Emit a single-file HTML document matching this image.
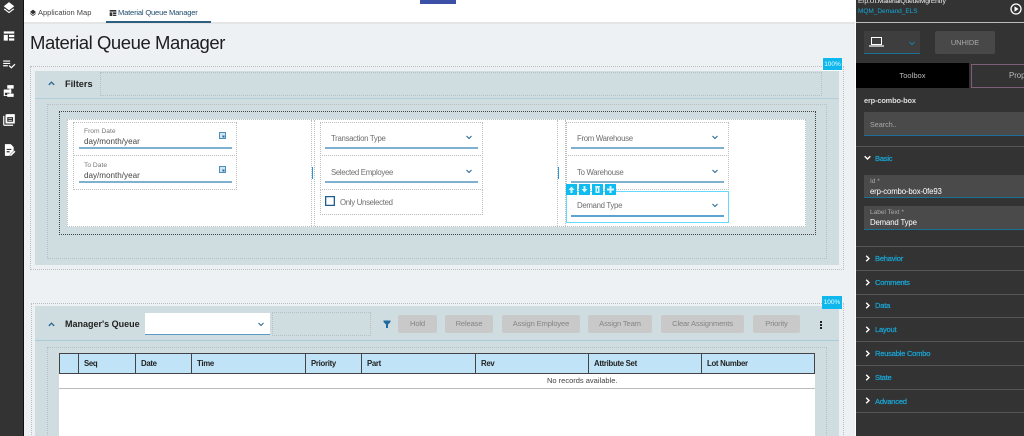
<!DOCTYPE html>
<html lang="en"><head><meta charset="utf-8"><title>Material Queue Manager</title>
<style>
html,body{margin:0;padding:0;width:1024px;height:436px;overflow:hidden;background:#eef1f4;font-family:"Liberation Sans",sans-serif}
#r{position:relative;width:1024px;height:436px;overflow:hidden}
#r div,#r span,#r svg{position:absolute;box-sizing:border-box}
.t{white-space:nowrap;line-height:12px;font-size:8.5px;color:#555}
.l{font-size:7.8px;letter-spacing:-.3px;color:#6f6f6f;margin-top:1px}
.d{border:1px dotted #b9bebf}
.u{height:2px;background:#7fb0d0}
.w{background:#fff}
.btn{top:315px;height:18px;background:#c9c9c9;border-radius:2px;color:#858585;font-size:7.6px;letter-spacing:-.15px;line-height:18px;text-align:center;white-space:nowrap}
.th{top:354px;height:19px;background:#c0e3f7;border-right:1px solid #444;font-size:7.8px;letter-spacing:-.3px;font-weight:bold;line-height:19px;color:#222;padding-left:5px;white-space:nowrap}
.sec{left:875px;color:#18a8d8;font-size:7.6px;letter-spacing:-.25px;white-space:nowrap;line-height:12px;-webkit-text-stroke:.2px #18a8d8}
.dv{left:856px;width:168px;height:1px;background:#555}
.tb{top:184px;width:11px;height:11px;background:#0fbcf0}
</style></head><body><div id="r">

<!-- left rail -->
<div style="left:0;top:0;width:23px;height:436px;background:#333"></div>
<div style="left:23px;top:0;width:1px;height:436px;background:#111"></div>
<svg style="left:2px;top:1px" width="14" height="14" viewBox="0 0 24 24" fill="#fff"><path d="M11.99 18.54l-7.37-5.73L3 14.07l9 7 9-7-1.63-1.27-7.38 5.74zM12 16l7.36-5.73L21 9l-9-7-9 7 1.63 1.27L12 16z"/></svg>
<svg style="left:2px;top:29px" width="14" height="14" viewBox="0 0 24 24" fill="#fff"><path d="M3 4h18v4H3zM3 10h7v10H3zM12 10h9v4h-9zM12 16h9v4h-9z"/></svg>
<svg style="left:2px;top:57px" width="14" height="14" viewBox="0 0 24 24" fill="#fff"><path d="M14 10H2v2h12v-2zm0-4H2v2h12V6zM2 16h8v-2H2v2zm19.5-4.5L23 13l-6.99 7-4.51-4.5L13 14l3.01 3 5.49-5.500z"/></svg>
<svg style="left:2px;top:84px" width="14" height="14" viewBox="0 0 24 24" fill="#fff"><path d="M9 2h11v6H9zM3 9.500h13v5.500H3zM9 16.500h11V22H9zM13 8h2v1.500h-2zM13 15h2v1.500h-2zM3 15h2v4h4v1.500H3z"/></svg>
<svg style="left:2px;top:113px" width="14" height="14" viewBox="0 0 24 24" fill="#fff"><path d="M2 5h2v15h15v2H4a2 2 0 0 1-2-2zM8 2h14v16H6V4a2 2 0 0 1 2-2zm1 5v8h10V7zm2 2h6v1h-6zm0 3h6v1h-6z" fill-rule="evenodd"/></svg>
<svg style="left:2px;top:143px" width="14" height="14" viewBox="0 0 24 24" fill="#fff"><path d="M5 2h10l5 5v6l-3 3-3 3-1 3H5zM8 10v2h8v-2zM8 14v2h5v-2zM21 13l2 2-7 7h-2v-2z" fill-rule="evenodd"/></svg>

<!-- top bar -->
<div class="w" style="left:24px;top:0;width:831px;height:22px"></div>
<div style="left:24px;top:22px;width:831px;height:2px;background:#e3e5e6"></div>
<div style="left:420px;top:0;width:36px;height:4px;background:#3d50a8"></div>
<svg style="left:29px;top:9px" width="8" height="8" viewBox="0 0 24 24" fill="#333"><path d="M11.990 18.540l-7.370-5.730L3 14.070l9 7 9-7-1.630-1.270-7.380 5.740zM12 16l7.360-5.730L21 9l-9-7-9 7 1.630 1.270L12 16z"/></svg>
<span class="t" style="left:38px;top:7px;font-size:7.500px;color:#444">Application Map</span>
<svg style="left:109px;top:9px" width="8" height="8" viewBox="0 0 24 24" fill="#333"><path d="M2 3h20v5H2zM2 10h8v11H2zM12 10h10v5H12zM12 17h10v4H12z"/></svg>
<span class="t" style="left:118px;top:7px;font-size:7.600px;letter-spacing:-.2px;color:#1f4d6c">Material Queue Manager</span>
<div style="left:106px;top:21px;width:105px;height:2px;background:#2c5f80"></div>

<span class="t" style="left:30px;top:30px;font-size:18.500px;letter-spacing:-.44px;line-height:26px;color:#1e1e1e">Material Queue Manager</span>

<!-- Filters -->
<div class="d" style="left:30px;top:66px;width:814px;height:204px"></div>
<div style="left:35px;top:71px;width:804px;height:194px;background:#d0dde0"></div>
<div style="left:35px;top:98px;width:804px;height:1px;background:#b3d0da"></div>
<svg style="left:47px;top:79px" width="9" height="9" viewBox="0 0 10 10" fill="none" stroke="#2a6a94" stroke-width="1.500"><path d="M2 6.500L5 3.500l3 3"/></svg>
<span class="t" style="left:65px;top:78px;font-size:9.200px;font-weight:bold;color:#222">Filters</span>
<div class="d" style="left:100px;top:72px;width:722px;height:24px"></div>
<div class="d" style="left:47px;top:104px;width:780px;height:155px"></div>
<div style="left:59px;top:111px;width:757px;height:124px;border:1px dotted #444"></div>
<div class="w d" style="left:67px;top:119px;width:739px;height:108px"></div>

<div class="d" style="left:311px;top:120px;width:4px;height:106px;border-top:0;border-bottom:0"></div>
<div class="d" style="left:557px;top:120px;width:9px;height:106px;border-top:0;border-bottom:0"></div>
<div style="left:312px;top:167px;width:1px;height:12px;background:#2a96d8"></div>
<div style="left:558px;top:167px;width:1px;height:12px;background:#2a96d8"></div>

<!-- col 1 -->
<div class="d" style="left:73px;top:122px;width:164px;height:34px"></div>
<div class="d" style="left:73px;top:155px;width:164px;height:35px"></div>
<span class="t" style="left:84px;top:126px;font-size:6.700px;color:#777">From Date</span>
<span class="t" style="left:84px;top:136px;font-size:8.100px;color:#444">day/month/year</span>
<div class="u" style="left:79px;top:147px;width:153px"></div>
<span class="t" style="left:84px;top:160px;font-size:6.700px;color:#777">To Date</span>
<span class="t" style="left:84px;top:170px;font-size:8.100px;color:#444">day/month/year</span>
<div class="u" style="left:79px;top:181px;width:153px"></div>
<svg style="left:219px;top:132px" width="7" height="7" viewBox="0 0 7 7"><path d="M.5.500h6v6h-6z" fill="#cfe3f0" stroke="#4a90bd"/><path d="M3.500 3.500h2v2h-2z" fill="#2a6a94"/></svg>
<svg style="left:219px;top:166px" width="7" height="7" viewBox="0 0 7 7"><path d="M.5.500h6v6h-6z" fill="#cfe3f0" stroke="#4a90bd"/><path d="M3.500 3.500h2v2h-2z" fill="#2a6a94"/></svg>

<!-- col 2 -->
<div class="d" style="left:320px;top:122px;width:163px;height:34px"></div>
<div class="d" style="left:320px;top:155px;width:163px;height:35px"></div>
<div class="d" style="left:320px;top:189px;width:163px;height:26px"></div>
<span class="t l" style="left:331px;top:132px">Transaction Type</span>
<div class="u" style="left:325px;top:147px;width:153px"></div>
<span class="t l" style="left:331px;top:166px">Selected Employee</span>
<div class="u" style="left:325px;top:181px;width:153px"></div>
<svg style="left:466px;top:135px" width="6" height="5" viewBox="0 0 6 5" fill="none" stroke="#2a6a94" stroke-width="1.100"><path d="M.5 1l2.500 2.500L5.500 1"/></svg>
<svg style="left:466px;top:169px" width="6" height="5" viewBox="0 0 6 5" fill="none" stroke="#2a6a94" stroke-width="1.100"><path d="M.5 1l2.500 2.500L5.500 1"/></svg>
<div style="left:325px;top:196px;width:10px;height:10px;border:1px solid #1f5d8f;box-shadow:inset 0 0 0 .3px #1f5d8f"></div>
<span class="t l" style="left:340px;top:196px">Only Unselected</span>

<!-- col 3 -->
<div class="d" style="left:566px;top:122px;width:163px;height:34px"></div>
<div class="d" style="left:566px;top:155px;width:163px;height:35px"></div>
<span class="t l" style="left:577px;top:132px">From Warehouse</span>
<div class="u" style="left:571px;top:147px;width:153px"></div>
<span class="t l" style="left:577px;top:166px">To Warehouse</span>
<div class="u" style="left:571px;top:181px;width:153px"></div>
<div class="w" style="left:566px;top:191px;width:163px;height:32px;border:1px solid #66d9ff"></div>
<span class="t l" style="left:577px;top:199px">Demand Type</span>
<div class="u" style="left:571px;top:215px;width:153px;background:#5da3cf"></div>
<svg style="left:712px;top:135px" width="6" height="5" viewBox="0 0 6 5" fill="none" stroke="#2a6a94" stroke-width="1.100"><path d="M.5 1l2.500 2.500L5.500 1"/></svg>
<svg style="left:712px;top:169px" width="6" height="5" viewBox="0 0 6 5" fill="none" stroke="#2a6a94" stroke-width="1.100"><path d="M.5 1l2.500 2.500L5.500 1"/></svg>
<svg style="left:712px;top:203px" width="6" height="5" viewBox="0 0 6 5" fill="none" stroke="#2a6a94" stroke-width="1.100"><path d="M.5 1l2.500 2.500L5.500 1"/></svg>
<div class="tb" style="left:566px"><svg style="left:2px;top:2px" width="7" height="7" viewBox="0 0 7 7"><path d="M3.500.5L6.500 4H4.500v3h-2V4H.5z" fill="#d8f5ff"/></svg></div>
<div class="tb" style="left:579px"><svg style="left:2px;top:2px" width="7" height="7" viewBox="0 0 7 7"><path d="M3.500 6.500L.5 3h2V0h2v3h2z" fill="#d8f5ff"/></svg></div>
<div class="tb" style="left:592px"><svg style="left:2px;top:2px" width="7" height="7" viewBox="0 0 7 7"><path d="M1.500 1h4v6h-4z" fill="#d8f5ff"/><path d="M1 0h5v1H1z" fill="#d8f5ff"/><path d="M3 2.500h1v3H3z" fill="#0fbcf0"/></svg></div>
<div class="tb" style="left:605px"><svg style="left:2px;top:2px" width="7" height="7" viewBox="0 0 7 7"><path d="M2.500 0h2v2.500H7v2H4.500V7h-2V4.500H0v-2h2.500z" fill="#d8f5ff"/></svg></div>

<div style="left:822px;top:58px;width:20px;height:13px;background:#0fb8ec;border:1px solid #fff;border-width:0 0 1px 1px;color:#e8fbff;font-size:6.500px;line-height:13px;text-align:center">100%</div>

<!-- Manager's Queue -->
<div class="d" style="left:31px;top:303px;width:813px;height:140px"></div>
<div style="left:35px;top:306px;width:804px;height:130px;background:#d0dde0"></div>
<div style="left:35px;top:340px;width:804px;height:1px;background:#a9ccd9"></div>
<svg style="left:47px;top:320px" width="9" height="9" viewBox="0 0 10 10" fill="none" stroke="#2a6a94" stroke-width="1.500"><path d="M2 6.500L5 3.500l3 3"/></svg>
<span class="t" style="left:65px;top:318px;font-size:9px;font-weight:bold;color:#222">Manager's Queue</span>
<div class="w" style="left:145px;top:313px;width:125px;height:22px;border-bottom:1px solid #5a9cc5"></div>
<svg style="left:258px;top:322px" width="6" height="5" viewBox="0 0 6 5" fill="none" stroke="#2a6a94" stroke-width="1.100"><path d="M.5 1l2.500 2.500L5.500 1"/></svg>
<div class="d" style="left:272px;top:312px;width:99px;height:24px"></div>
<svg style="left:383px;top:320px" width="8" height="8" viewBox="0 0 8 8"><path d="M.5.500h7v1.500L5 4.500V8H3V4.500L.5 2z" fill="#1f6aa0"/></svg>
<div class="btn" style="left:398px;width:39px">Hold</div>
<div class="btn" style="left:445px;width:48px">Release</div>
<div class="btn" style="left:502px;width:78px">Assign Employee</div>
<div class="btn" style="left:588px;width:64px">Assign Team</div>
<div class="btn" style="left:661px;width:83px">Clear Assignments</div>
<div class="btn" style="left:753px;width:47px">Priority</div>
<div style="left:820px;top:321px;width:2px;height:2px;background:#222;box-shadow:0 3px 0 #222,0 6px 0 #222"></div>

<div class="d" style="left:47px;top:347px;width:780px;height:100px"></div>
<div class="w" style="left:59px;top:353px;width:756px;height:83px"></div>
<div style="left:59px;top:353px;width:756px;height:1px;background:#444"></div>
<div style="left:59px;top:354px;width:1px;height:19px;background:#444"></div>
<div class="th" style="left:60px;width:19px;padding:0"></div>
<div class="th" style="left:79px;width:57px">Seq</div>
<div class="th" style="left:136px;width:56px">Date</div>
<div class="th" style="left:192px;width:114px">Time</div>
<div class="th" style="left:306px;width:56px">Priority</div>
<div class="th" style="left:362px;width:114px">Part</div>
<div class="th" style="left:476px;width:113px">Rev</div>
<div class="th" style="left:589px;width:113px">Attribute Set</div>
<div class="th" style="left:702px;width:113px">Lot Number</div>
<div style="left:59px;top:373px;width:756px;height:1px;background:#444"></div>
<div style="left:59px;top:388px;width:756px;height:1px;background:#bbb"></div>
<span class="t" style="left:547px;top:375px;font-size:7.500px;color:#444">No records available.</span>
<div style="left:822px;top:296px;width:20px;height:13px;background:#0fb8ec;color:#e8fbff;font-size:6.500px;line-height:13px;text-align:center">100%</div>

<!-- right panel -->
<div style="left:855px;top:0;width:1px;height:436px;background:#fff"></div>
<div style="left:856px;top:0;width:168px;height:436px;background:#333"></div>
<div style="left:856px;top:22px;width:168px;height:1px;background:#bbb"></div>
<span class="t" style="left:858px;top:-4px;font-size:6.800px;letter-spacing:-.2px;color:#eee">Erp.UI.MaterialQueueMgrEntry</span>
<span class="t" style="left:858px;top:6px;font-size:6.500px;letter-spacing:-.03px;color:#11a9d6">MQM_Demand_ELS</span>
<svg style="left:1010px;top:3px" width="12" height="12" viewBox="0 0 12 12"><circle cx="6" cy="6" r="5" fill="none" stroke="#fff" stroke-width="1.300"/><path d="M4.500 3.200L8.500 6l-4 2.800z" fill="#fff"/></svg>

<div style="left:864px;top:31px;width:56px;height:23px;background:#3e3e3e;border-bottom:1px solid #1c6f96"></div>
<svg style="left:869px;top:36px" width="15" height="11" viewBox="0 0 15 11" fill="none" stroke="#fff"><path d="M2.500 1.500h10v7h-10z"/><path d="M0 10h15" stroke-width="1.200"/></svg>
<svg style="left:909px;top:41px" width="6" height="5" viewBox="0 0 6 5" fill="none" stroke="#1c7aa6" stroke-width="1.100"><path d="M.5 1l2.500 2.500L5.500 1"/></svg>
<div style="left:935px;top:31px;width:60px;height:23px;background:#484848;border-radius:2px;color:#aaa;font-size:7.400px;line-height:23px;text-align:center">UNHIDE</div>
<div style="left:856px;top:63px;width:113px;height:25px;background:#000;color:#bbb;font-size:7.600px;line-height:25px;text-align:center">Toolbox</div>
<div style="left:971px;top:64px;width:70px;height:24px;border:1px solid #7d5f78;color:#bbb;font-size:7.800px;line-height:22px;padding-left:37px;white-space:nowrap">Properties</div>
<span class="t" style="left:864px;top:95px;font-size:7.400px;letter-spacing:-.15px;font-weight:bold;color:#ddd">erp-combo-box</span>
<div style="left:864px;top:112px;width:160px;height:24px;background:#4a4a4a;border-bottom:1px solid #1c6f96"></div>
<span class="t" style="left:870px;top:119px;font-size:7.200px;color:#aaa">Search..</span>

<div class="dv" style="top:146px"></div>
<svg style="left:864px;top:155px" width="7" height="6" viewBox="0 0 7 6" fill="none" stroke="#fff" stroke-width="1.400"><path d="M.7 1.200L3.500 4l2.800-2.800"/></svg>
<span class="sec" style="top:153px">Basic</span>
<div style="left:864px;top:175px;width:160px;height:23px;background:#4a4a4a;border-bottom:1px solid #1c6f96"></div>
<span class="t" style="left:870px;top:176px;font-size:6.500px;color:#aaa">Id *</span>
<span class="t" style="left:870px;top:186px;font-size:7.800px;letter-spacing:-.15px;color:#fff">erp-combo-box-0fe93</span>
<div style="left:864px;top:206px;width:160px;height:24px;background:#4a4a4a;border-bottom:1px solid #1c6f96"></div>
<span class="t" style="left:870px;top:207px;font-size:6.500px;color:#aaa">Label Text *</span>
<span class="t" style="left:870px;top:217px;font-size:7.800px;letter-spacing:-.15px;color:#fff">Demand Type</span>

<div class="dv" style="top:246px"></div>
<div class="dv" style="top:270px"></div>
<div class="dv" style="top:294px"></div>
<div class="dv" style="top:317px"></div>
<div class="dv" style="top:341px"></div>
<div class="dv" style="top:365px"></div>
<div class="dv" style="top:389px"></div>
<div class="dv" style="top:412px"></div>

<svg style="left:865px;top:255px" width="6" height="7" viewBox="0 0 6 7" fill="none" stroke="#fff" stroke-width="1.400"><path d="M1.200.7L4 3.500 1.200 6.300"/></svg>
<span class="sec" style="top:253px">Behavior</span>
<svg style="left:865px;top:279px" width="6" height="7" viewBox="0 0 6 7" fill="none" stroke="#fff" stroke-width="1.400"><path d="M1.200.7L4 3.500 1.200 6.300"/></svg>
<span class="sec" style="top:277px">Comments</span>
<svg style="left:865px;top:302px" width="6" height="7" viewBox="0 0 6 7" fill="none" stroke="#fff" stroke-width="1.400"><path d="M1.200.7L4 3.500 1.200 6.300"/></svg>
<span class="sec" style="top:300px">Data</span>
<svg style="left:865px;top:326px" width="6" height="7" viewBox="0 0 6 7" fill="none" stroke="#fff" stroke-width="1.400"><path d="M1.200.7L4 3.500 1.200 6.300"/></svg>
<span class="sec" style="top:324px">Layout</span>
<svg style="left:865px;top:350px" width="6" height="7" viewBox="0 0 6 7" fill="none" stroke="#fff" stroke-width="1.400"><path d="M1.200.7L4 3.500 1.200 6.300"/></svg>
<span class="sec" style="top:348px">Reusable Combo</span>
<svg style="left:865px;top:374px" width="6" height="7" viewBox="0 0 6 7" fill="none" stroke="#fff" stroke-width="1.400"><path d="M1.200.7L4 3.500 1.200 6.300"/></svg>
<span class="sec" style="top:372px">State</span>
<svg style="left:865px;top:397px" width="6" height="7" viewBox="0 0 6 7" fill="none" stroke="#fff" stroke-width="1.400"><path d="M1.200.7L4 3.500 1.200 6.300"/></svg>
<span class="sec" style="top:396px">Advanced</span>

</div></body></html>
